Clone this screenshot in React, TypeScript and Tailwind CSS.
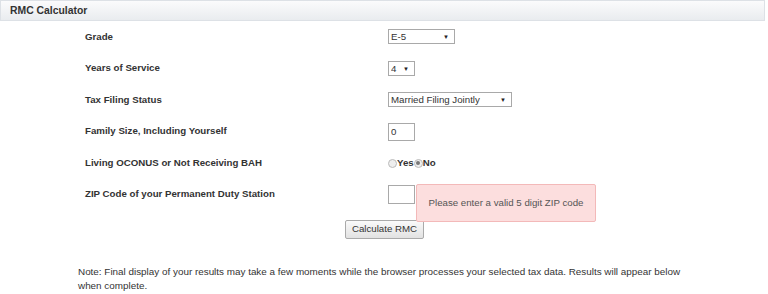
import React from 'react';

const font = { fontFamily: '"Liberation Sans", Arial, sans-serif' };

const Select: React.FC<{ value: string; width: string }> = ({ value, width }) => (
  <div className={`relative ${width} h-[15px]`}>
    <select
      defaultValue={value}
      className="block appearance-none w-full h-full border border-[#a9a9a9] bg-white text-[9.7px] leading-[13px] text-[#333] pl-[2px] outline-none"
    >
      <option>{value}</option>
    </select>
    <span className="absolute right-[6px] top-[5px] text-[6px] leading-[6px] text-[#222] pointer-events-none">▼</span>
  </div>
);

const rows: { label: string; control: React.ReactNode }[] = [
  { label: 'Grade', control: <Select value="E-5" width="w-[67px]" /> },
  { label: 'Years of Service', control: <Select value="4" width="w-[27px]" /> },
  { label: 'Tax Filing Status', control: <Select value="Married Filing Jointly" width="w-[124px]" /> },
  {
    label: 'Family Size, Including Yourself',
    control: <input defaultValue="0" className="block w-[27px] h-[18px] border border-[#a9a9a9] text-[9.7px] text-[#333] pl-[2px] outline-none" />,
  },
  {
    label: 'Living OCONUS or Not Receiving BAH',
    control: (
      <div className="flex items-center text-[9.7px] font-bold text-[#333]">
        <span className="w-[9px] h-[9px] rounded-full border border-[#bbb] bg-[#eee]" />
        <span>Yes</span>
        <span className="w-[9px] h-[9px] rounded-full border border-[#bbb] bg-[#eee] flex items-center justify-center">
          <span className="w-[4px] h-[4px] rounded-full bg-[#777]" />
        </span>
        <span>No</span>
      </div>
    ),
  },
  {
    label: 'ZIP Code of your Permanent Duty Station',
    control: (
      <div className="relative">
        <input className="block w-[27px] h-[19px] border border-[#a9a9a9] outline-none" />
        <div className="absolute left-[28px] top-[-1px] w-[180px] h-[38px] bg-[#fcdede] border border-[#f3b9b9] rounded-[2px] flex items-center justify-center text-[9.7px] text-[#555] z-10">
          Please enter a valid 5 digit ZIP code
        </div>
      </div>
    ),
  },
];

export default function App() {
  return (
    <div className="w-[768px] h-[294px] bg-white overflow-hidden" style={font}>
      <div className="w-[765px] h-[21px] border border-[#dde1e6] bg-gradient-to-b from-[#fbfbfc] to-[#e9ecef] flex items-center pl-[9px]">
        <span className="text-[10.4px] font-bold text-[#333]">RMC Calculator</span>
      </div>
      <div className="pl-[85px]">
        {rows.map(r => (
          <div key={r.label} className="flex items-center h-[31.6px]">
            <div className="w-[303px] text-[9.7px] font-bold text-[#333]">{r.label}</div>
            {r.control}
          </div>
        ))}
      </div>
      <div className="flex justify-center mt-[9px]">
        <button className="block ml-[1px] h-[19px] px-[6px] border border-[#aaa] rounded-[2px] bg-gradient-to-b from-[#fafafa] to-[#e2e2e2] text-[9.7px] text-[#333]">
          Calculate RMC
        </button>
      </div>
      <p className="pl-[78px] pr-[80px] mt-[26px] text-[9.9px] leading-[14px] text-[#333]">
        Note: Final display of your results may take a few moments while the browser processes your selected tax data. Results will appear below when complete.
      </p>
    </div>
  );
}
